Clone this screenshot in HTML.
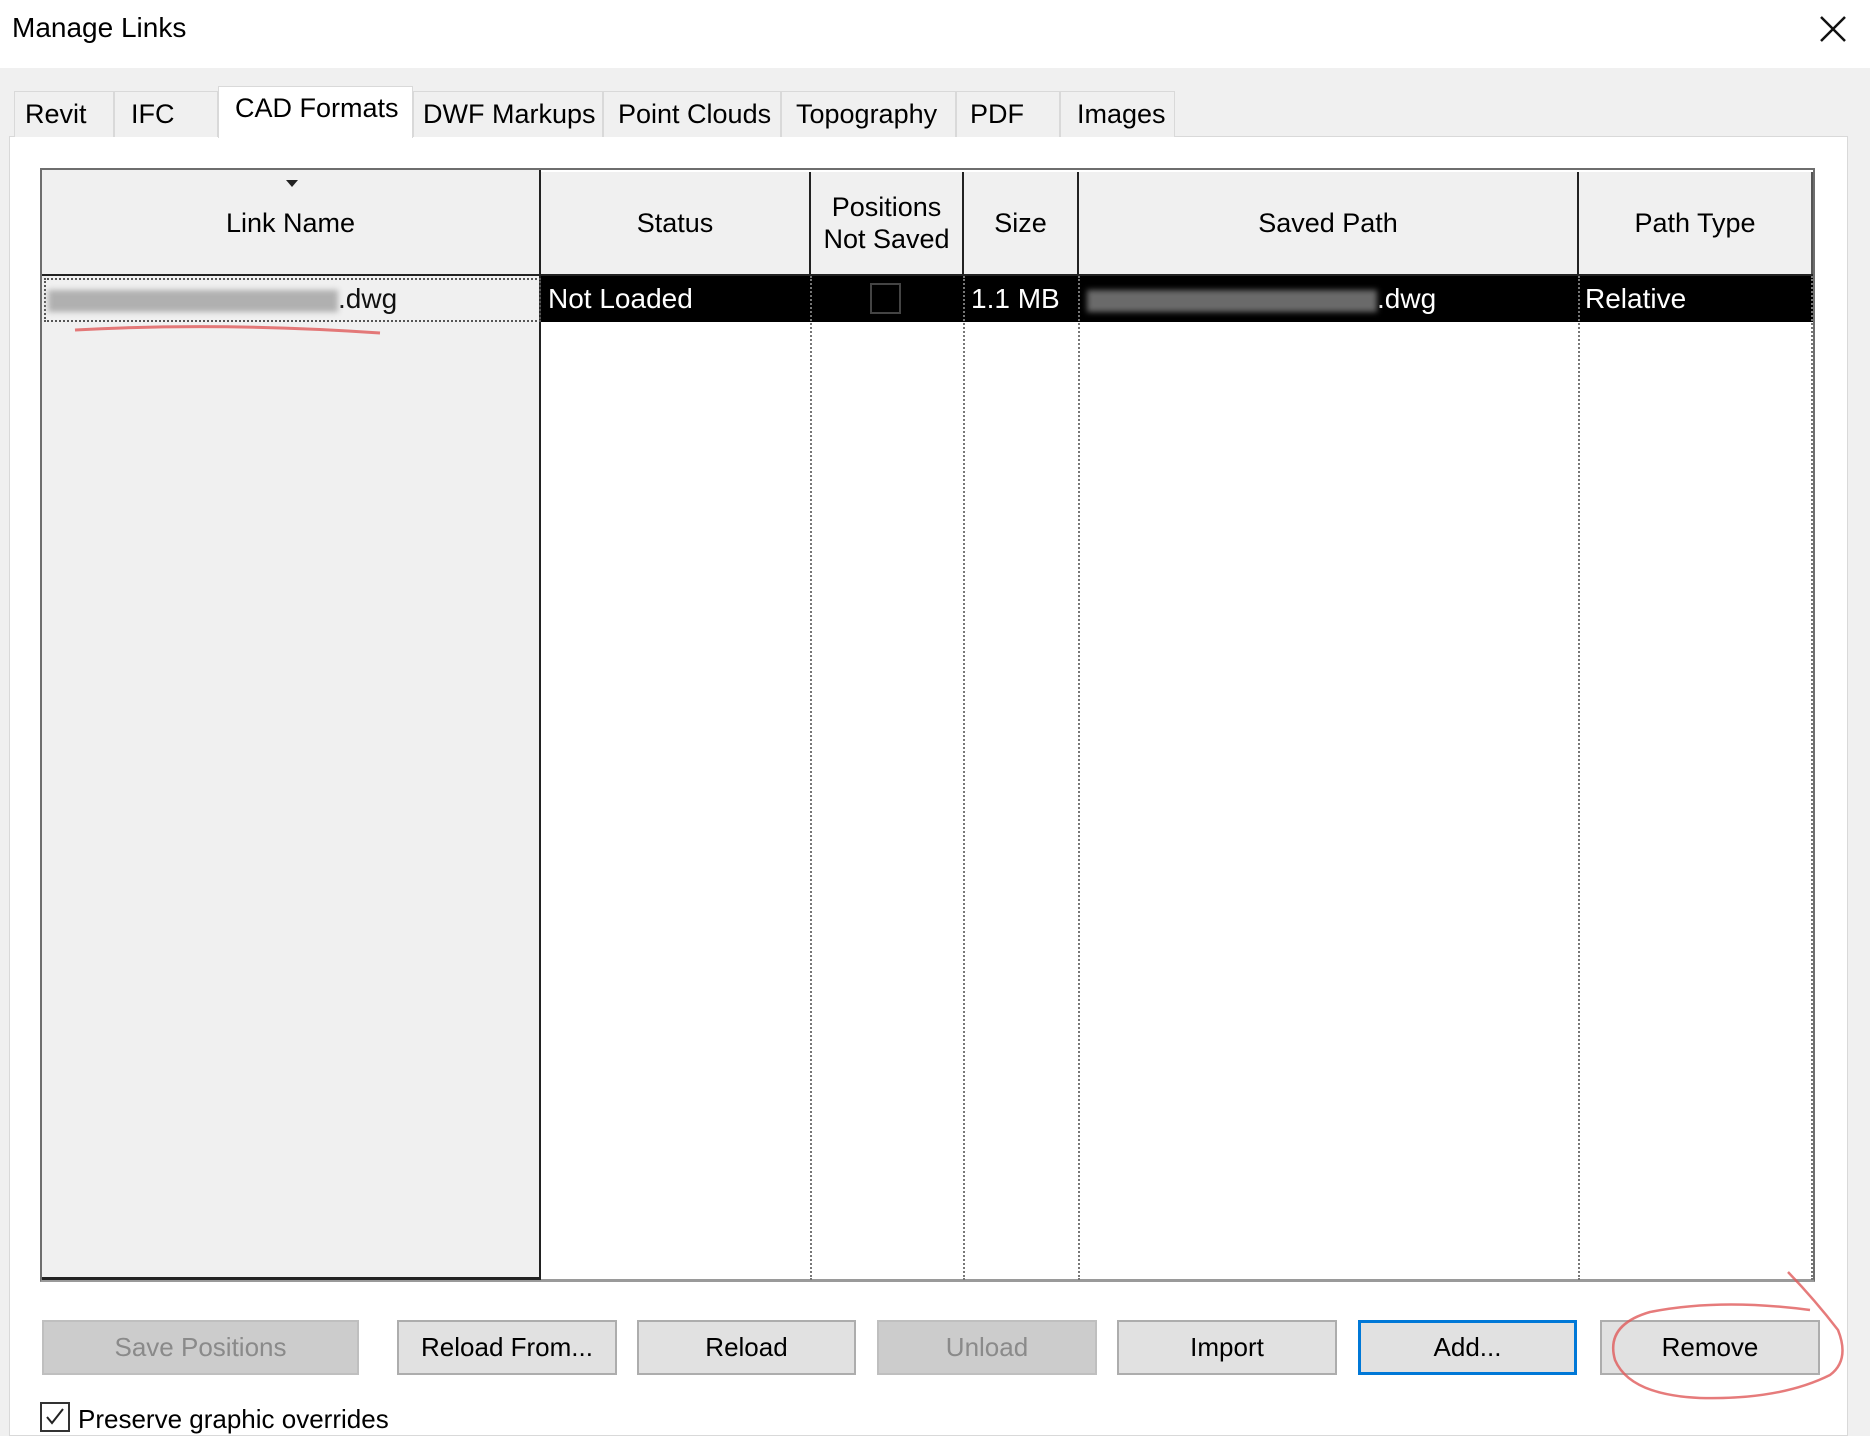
<!DOCTYPE html>
<html><head><meta charset="utf-8"><style>
*{box-sizing:border-box;margin:0;padding:0}
body{width:1870px;height:1417px;background:#f0f0f0;font-family:"Liberation Sans",sans-serif;position:relative;overflow:hidden;color:#000}
.abs{position:absolute}
.title{left:0;top:0;width:1870px;height:68px;background:#fff}
.tab{position:absolute;top:91px;height:46px;border:1px solid #d9d9d9;border-bottom:none;background:#f0f0f0;font-size:27px;padding-left:10px;line-height:44px}
.panel{left:9px;top:136px;width:1839px;height:1300px;background:#fff;border:1px solid #d9d9d9}
.th{position:absolute;top:172px;height:102px;background:#f0f0f0;border-right:2px solid #222;display:flex;align-items:center;justify-content:center;text-align:center;font-size:27px;line-height:32px}
.btn{position:absolute;top:1320px;height:55px;background:#e1e1e1;border:2px solid #adadad;font-size:26px;display:flex;align-items:center;justify-content:center}
.dis{background:#cccccc;border-color:#bfbfbf;color:#8a8a8a}
.vl{position:absolute;top:322px;height:958px;border-left:2px dotted #777}
.cell{position:absolute;top:276px;height:46px;font-size:28px;line-height:46px;color:#fff}
.blur{display:inline-block;height:22px;background:#999;filter:blur(3px);vertical-align:middle}
</style></head><body>
<div class="abs title"></div>
<div class="abs" style="left:12px;top:12px;font-size:28px">Manage Links</div>
<svg class="abs" style="left:1818px;top:14px" width="30" height="30"><path d="M3 3L27 27M27 3L3 27" stroke="#111" stroke-width="2.5"/></svg>
<div class="abs panel"></div>
<div class="tab" style="left:14px;width:100px">Revit</div>
<div class="tab" style="left:114px;width:104px;padding-left:16px">IFC</div>
<div class="tab" style="left:218px;width:195px;top:86px;height:52px;background:#fff;padding-left:16px;line-height:42px">CAD Formats</div>
<div class="tab" style="left:413px;width:190px;padding-left:9px">DWF Markups</div>
<div class="tab" style="left:603px;width:178px;padding-left:14px">Point Clouds</div>
<div class="tab" style="left:781px;width:175px;padding-left:14px">Topography</div>
<div class="tab" style="left:956px;width:104px;padding-left:13px">PDF</div>
<div class="tab" style="left:1060px;width:115px;padding-left:16px">Images</div>
<div class="abs" style="left:40px;top:168px;width:1775px;height:1114px;border:2px solid #6e6e6e;border-bottom:3px solid #9a9a9a;background:#fff"></div>
<div class="abs" style="left:42px;top:170px;width:499px;height:1110px;background:#f0f0f0;border-right:2px solid #222;border-bottom:3px solid #222"></div>
<div class="th" style="left:42px;width:499px">Link Name</div>
<div class="abs" style="left:286px;top:180px;width:0;height:0;border-left:6px solid transparent;border-right:6px solid transparent;border-top:7px solid #222"></div>
<div class="th" style="left:541px;width:270px">Status</div>
<div class="th" style="left:811px;width:153px">Positions<br>Not Saved</div>
<div class="th" style="left:964px;width:115px">Size</div>
<div class="th" style="left:1079px;width:500px">Saved Path</div>
<div class="th" style="left:1579px;width:234px;border-right:2px solid #555">Path Type</div>
<div class="abs" style="left:42px;top:274px;width:1771px;height:2px;background:#222"></div>
<div class="abs" style="left:541px;top:276px;width:1272px;height:46px;background:#000"></div>
<div class="abs" style="left:44px;top:278px;width:497px;height:44px;border:2px dotted #555"></div>
<div class="cell" style="left:48px;color:#111"><span class="blur" style="width:290px;background:#b0b0b0"></span>.dwg</div>
<div class="cell" style="left:548px">Not Loaded</div>
<div class="abs" style="left:870px;top:283px;width:31px;height:31px;border:2px solid #444"></div>
<div class="cell" style="left:971px">1.1 MB</div>
<div class="cell" style="left:1087px"><span class="blur" style="width:290px;background:#6a6a6a"></span>.dwg</div>
<div class="cell" style="left:1585px">Relative</div>
<div class="vl" style="left:810px;top:276px;height:1004px"></div>
<div class="vl" style="left:963px;top:276px;height:1004px"></div>
<div class="vl" style="left:1078px;top:276px;height:1004px"></div>
<div class="vl" style="left:1578px;top:276px;height:1004px"></div>
<div class="vl" style="left:1811px;top:276px;height:1004px"></div>
<div class="btn dis" style="left:42px;width:317px">Save Positions</div>
<div class="btn" style="left:397px;width:220px">Reload From...</div>
<div class="btn" style="left:637px;width:219px">Reload</div>
<div class="btn dis" style="left:877px;width:220px">Unload</div>
<div class="btn" style="left:1117px;width:220px">Import</div>
<div class="btn" style="left:1358px;width:219px;border:3px solid #0078d7">Add...</div>
<div class="btn" style="left:1600px;width:220px">Remove</div>
<div class="abs" style="left:40px;top:1402px;width:30px;height:30px;border:2px solid #333;background:#fff"></div>
<svg class="abs" style="left:40px;top:1402px" width="30" height="30"><path d="M7 15L12 21L23 7" stroke="#222" stroke-width="2" fill="none"/></svg>
<div class="abs" style="left:78px;top:1404px;font-size:26px">Preserve graphic overrides</div>
<svg class="abs" style="left:0;top:0" width="1870" height="1417"><path d="M75 330 Q220 322 380 333" stroke="#e05a5a" stroke-width="3" fill="none" opacity=".8"/>
<path d="M1788 1272 Q1815 1300 1838 1330 Q1850 1360 1830 1375 Q1780 1400 1700 1398 Q1630 1395 1615 1360 Q1605 1325 1650 1312 Q1720 1298 1810 1310" stroke="#e05a5a" stroke-width="2.5" fill="none" opacity=".8"/></svg>
</body></html>
